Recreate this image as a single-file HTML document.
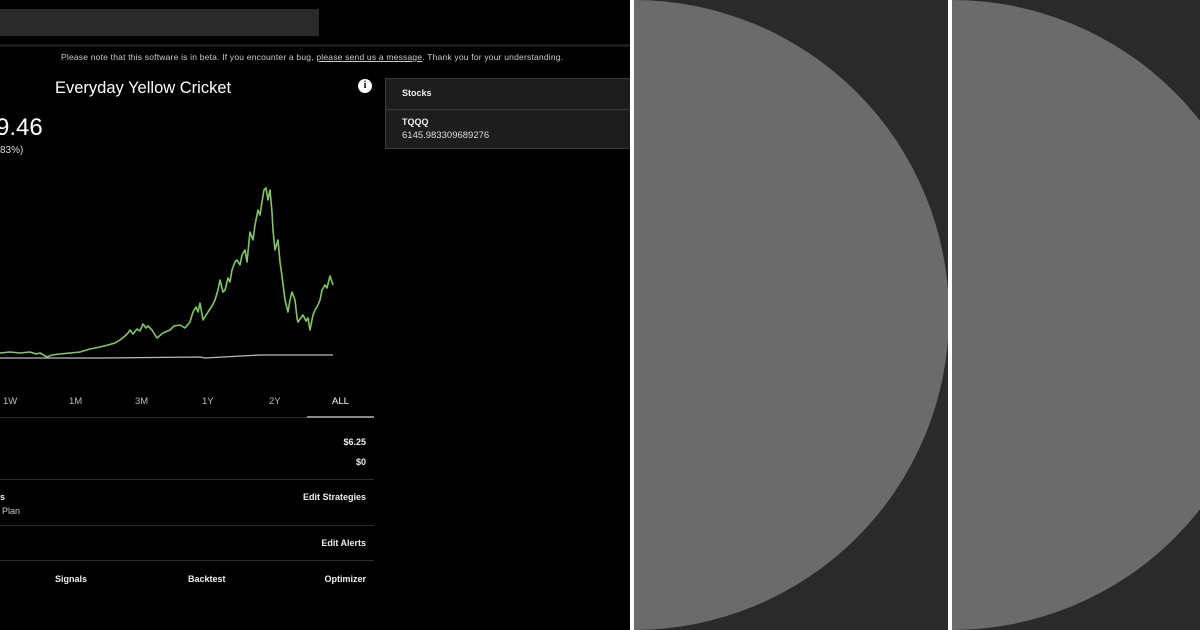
<!DOCTYPE html>
<html><head><meta charset="utf-8"><style>
*{margin:0;padding:0;box-sizing:border-box}
body{width:1200px;height:630px;overflow:hidden;background:#000;font-family:"Liberation Sans",sans-serif;position:relative;color:#fff}
.a{position:absolute;white-space:nowrap}
.panel{position:absolute;top:0;height:630px;background:#2a2a2a;overflow:hidden}
.circ{position:absolute;width:630px;height:630px;border-radius:50%;background:#6b6b6b;left:-315px;top:0}
.s{font-size:9px;font-weight:bold;color:#eee}
</style></head><body>
<div class="a" style="left:0;top:9px;width:319px;height:27px;background:#2a2a2a"></div>
<div class="a" style="left:0;top:44px;width:630px;height:3px;background:#1c1c1c"></div>
<div class="a" style="left:61px;top:52px;font-size:8.5px;color:#ccc;letter-spacing:0.2px">Please note that this software is in beta. If you encounter a bug, <u>please send us a message</u>. Thank you for your understanding.</div>
<div class="a" style="left:55px;top:79px;font-size:16.5px;color:#fff">Everyday Yellow Cricket</div>
<div class="a" style="left:358px;top:79px;width:14px;height:14px;border-radius:50%;background:#fff;color:#000;font-size:10px;font-weight:bold;text-align:center;line-height:14px;font-family:'Liberation Serif',serif">i</div>
<div class="a" style="left:-4px;top:114px;font-size:24px">9.46</div>
<div class="a" style="left:0;top:145px;font-size:10px;color:#ddd">83%)</div>
<div class="a" style="left:385px;top:78px;width:250px;height:71px;background:#1d1d1d;border:1px solid #3a3a3a"></div>
<div class="a" style="left:385px;top:109px;width:250px;height:1px;background:#3a3a3a"></div>
<div class="a s" style="left:402px;top:88px">Stocks</div>
<div class="a s" style="left:402px;top:117px">TQQQ</div>
<div class="a" style="left:402px;top:130px;font-size:9.5px;color:#ddd">6145.983309689276</div>
<svg class="a" style="left:0;top:0" width="630" height="630">
<polyline fill="none" stroke="#bbb" stroke-width="1.3" points="0,358 100,358 200,357 205,358 260,355 333,355"/>
<polyline fill="none" stroke="#7ecb5a" stroke-width="1.6" stroke-linejoin="round" points="0,353 10,352 20,353 30,352 36,354 40,353 47,357 52,355 60,354 70,353 80,352 90,349 100,347 108,345 115,343 120,340 125,336 128,333 130,330 133,334 137,329 140,331 143,324 146,328 148,326 152,330 157,338 163,333 170,330 174,326 180,325 185,328 190,322 193,312 196,307 198,312 200,303 203,320 208,312 212,306 215,300 218,290 220,280 223,292 225,290 228,278 230,282 232,270 235,262 237,260 240,265 242,255 245,250 247,262 250,232 253,240 255,225 258,210 260,215 262,202 264,190 266,188 268,200 270,190 272,212 273,230 275,250 278,240 280,262 282,276 285,300 288,312 290,300 292,292 295,300 297,318 298,322 303,315 306,321 308,318 310,330 313,315 315,310 318,305 320,300 322,290 325,285 327,288 330,276 333,285"/>
</svg>
<div class="a" style="left:3px;top:396px;font-size:9.5px;color:#bbb">1W</div>
<div class="a" style="left:69px;top:396px;font-size:9.5px;color:#bbb">1M</div>
<div class="a" style="left:135px;top:396px;font-size:9.5px;color:#bbb">3M</div>
<div class="a" style="left:202px;top:396px;font-size:9.5px;color:#bbb">1Y</div>
<div class="a" style="left:269px;top:396px;font-size:9.5px;color:#bbb">2Y</div>
<div class="a" style="left:332px;top:396px;font-size:9.5px;color:#fff">ALL</div>
<div class="a" style="left:0;top:417px;width:310px;height:1px;background:#2a2a2a"></div>
<div class="a" style="left:307px;top:416px;width:67px;height:2px;background:#888"></div>
<div class="a s" style="right:834px;top:437px">$6.25</div>
<div class="a s" style="right:834px;top:457px">$0</div>
<div class="a" style="left:0;top:479px;width:374px;height:1px;background:#2a2a2a"></div>
<div class="a s" style="left:0;top:492px">s</div>
<div class="a" style="left:2px;top:506px;font-size:9px;color:#ccc">Plan</div>
<div class="a s" style="right:834px;top:492px">Edit Strategies</div>
<div class="a" style="left:0;top:525px;width:374px;height:1px;background:#2a2a2a"></div>
<div class="a s" style="right:834px;top:538px">Edit Alerts</div>
<div class="a" style="left:0;top:560px;width:374px;height:1px;background:#2a2a2a"></div>
<div class="a s" style="left:55px;top:574px">Signals</div>
<div class="a s" style="left:188px;top:574px">Backtest</div>
<div class="a s" style="right:834px;top:574px">Optimizer</div>
<div class="a" style="left:630px;top:0;width:4px;height:630px;background:#fff"></div>
<div class="panel" style="left:634px;width:314px"><div class="circ"></div></div>
<div class="a" style="left:948px;top:0;width:4px;height:630px;background:#fff"></div>
<div class="panel" style="left:952px;width:248px"><div class="circ"></div></div>
</body></html>
